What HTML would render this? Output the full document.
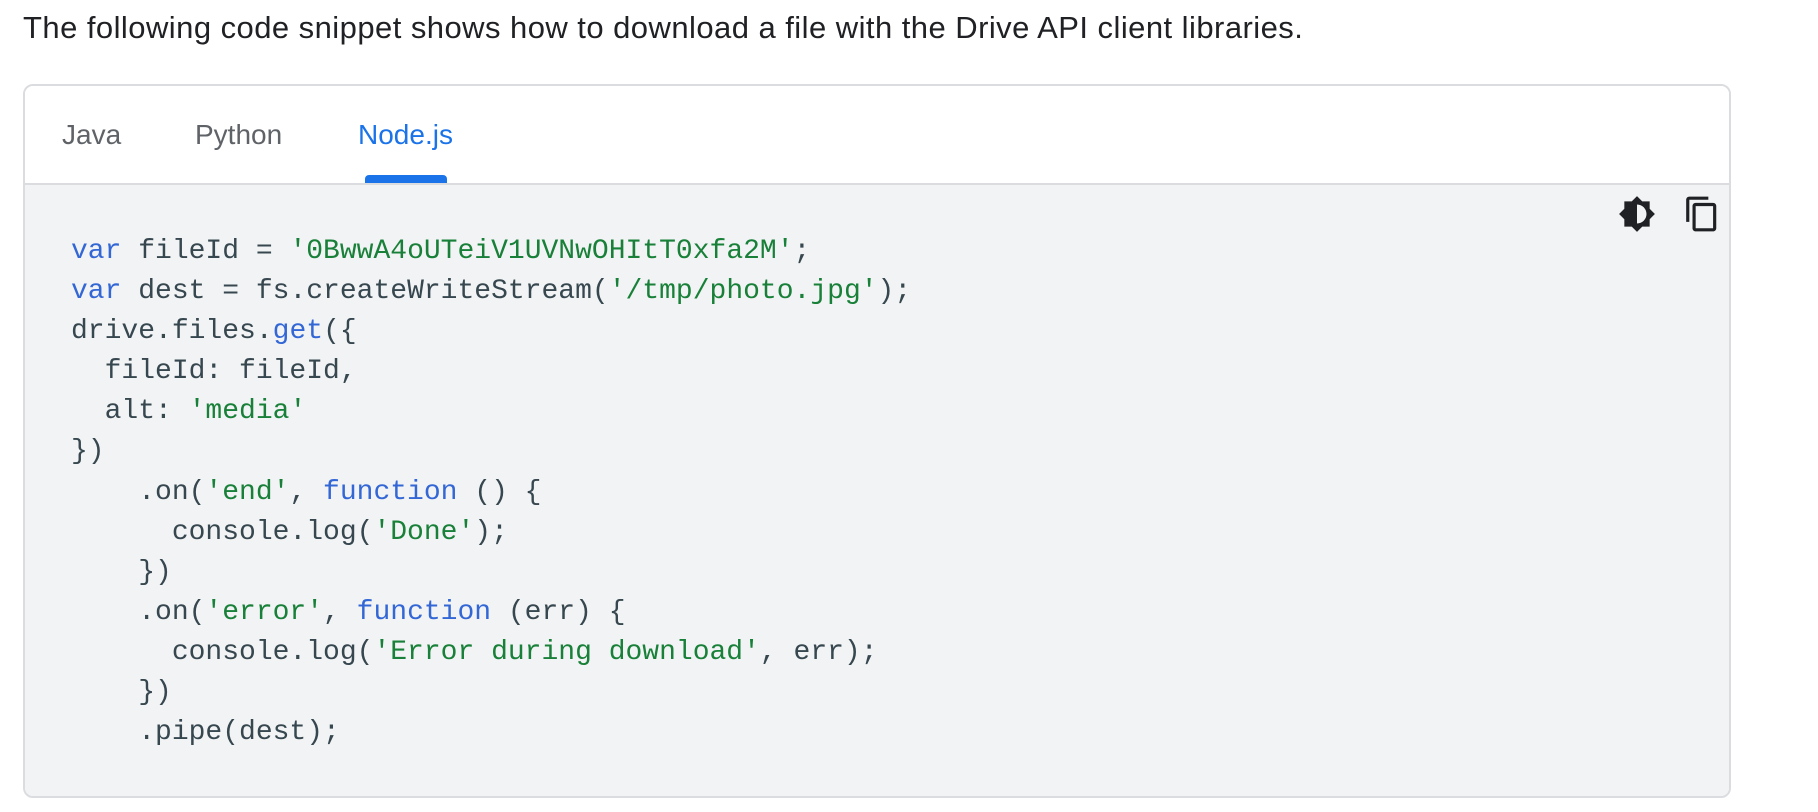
<!DOCTYPE html>
<html><head><meta charset="utf-8"><style>
html,body{margin:0;padding:0;background:#fff;width:1818px;height:812px;overflow:hidden;position:relative}
p{position:absolute;left:23px;top:8px;margin:0;font:31px/40px "Liberation Sans",sans-serif;color:#202124;letter-spacing:0.45px;white-space:nowrap}
.card{position:absolute;left:23px;top:84px;width:1708px;height:714px;border:2px solid #dadce0;border-radius:10px;overflow:hidden;box-sizing:border-box}
.tabs{height:97px;border-bottom:2px solid #dadce0;position:relative;background:#fff}
.tab{position:absolute;top:29px;font:28px/40px "Liberation Sans",sans-serif;color:#5f6368}
.ind{position:absolute;left:340px;top:89px;width:82px;height:8px;background:#1a73e8;border-radius:4px 4px 0 0}
.code{background:#f1f3f4;height:100%;position:relative}
pre{margin:0;position:absolute;left:46px;top:47px;font:28px/40.1px "Liberation Mono",monospace;color:#37474f}
.k{color:#3367d6}.s{color:#188038}
svg{position:absolute}
</style></head><body>
<p>The following code snippet shows how to download a file with the Drive API client libraries.</p>
<div class="card">
<div class="tabs">
<div class="tab" style="left:37px">Java</div>
<div class="tab" style="left:170px">Python</div>
<div class="tab" style="left:333px;color:#1a73e8">Node.js</div>
<div class="ind"></div>
</div>
<div class="code">
<svg style="left:1593px;top:10px" width="38" height="38" viewBox="0 0 24 24"><path fill="#202124" d="M20 8.69V4h-4.69L12 .69 8.69 4H4v4.69L.69 12 4 15.31V20h4.69L12 23.31 15.31 20H20v-4.69L23.31 12 20 8.69zM12 18V6c3.31 0 6 2.69 6 6s-2.69 6-6 6z"/></svg>
<svg style="left:1658px;top:10px" width="38" height="38" viewBox="0 0 24 24"><path fill="#202124" d="M16 1H4c-1.1 0-2 .9-2 2v14h2V3h12V1zm3 4H8c-1.1 0-2 .9-2 2v14c0 1.1.9 2 2 2h11c1.1 0 2-.9 2-2V7c0-1.1-.9-2-2-2zm0 16H8V7h11v14z"/></svg>
<pre><span class="k">var</span> fileId = <span class="s">'0BwwA4oUTeiV1UVNwOHItT0xfa2M'</span>;
<span class="k">var</span> dest = fs.createWriteStream(<span class="s">'/tmp/photo.jpg'</span>);
drive.files.<span class="k">get</span>({
  fileId: fileId,
  alt: <span class="s">'media'</span>
})
    .on(<span class="s">'end'</span>, <span class="k">function</span> () {
      console.log(<span class="s">'Done'</span>);
    })
    .on(<span class="s">'error'</span>, <span class="k">function</span> (err) {
      console.log(<span class="s">'Error during download'</span>, err);
    })
    .pipe(dest);</pre>
</div>
</div>
</body></html>
